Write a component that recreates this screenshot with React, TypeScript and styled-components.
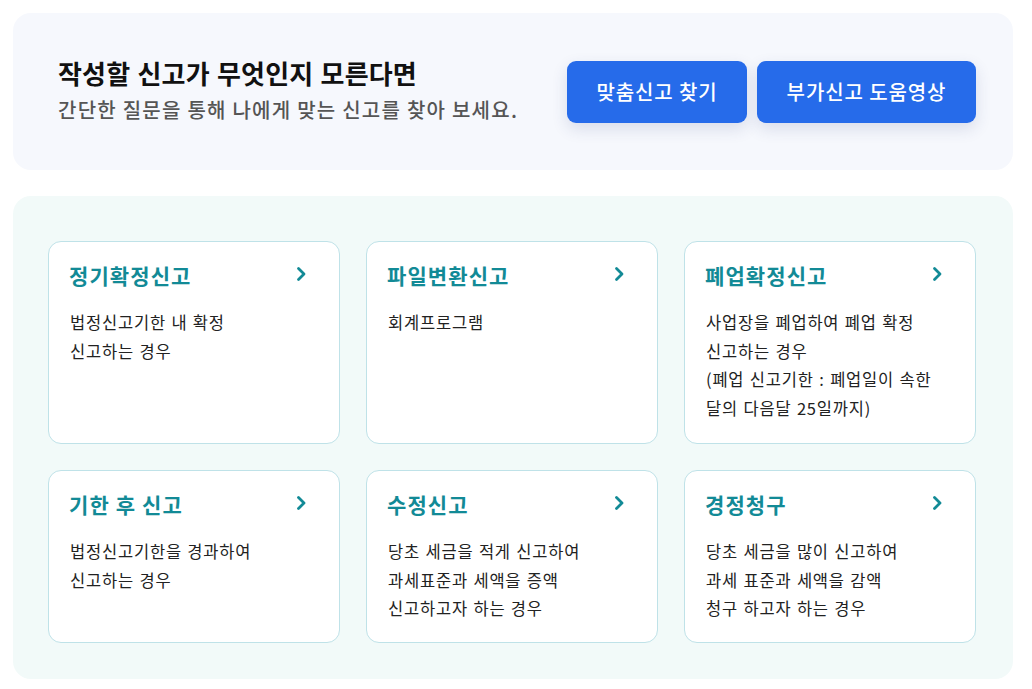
import React from "react";
import styled, {createGlobalStyle} from "styled-components";

const GlobalStyle = createGlobalStyle`
  html, body {
    margin: 0;
    padding: 0;
    background: #ffffff;
    font-family: "Noto Sans CJK KR", "Noto Sans", sans-serif;
    color: #222;
  }
`;

const Page = styled.div`
  display: flex;
  flex-direction: column;
  gap: 26px;
  padding: 13px 19px 9px 13px;
`;

const Banner = styled.section`
  display: flex;
  align-items: center;
  justify-content: space-between;
  height: 157px;
  box-sizing: border-box;
  padding: 0 37px 0 45px;
  background: #f6f8fd;
  border-radius: 18px;
`;

const BannerText = styled.div`
  display: flex;
  flex-direction: column;
  gap: 4px;
  margin-top: -3px;
`;

const BannerTitle = styled.h2`
  margin: 0;
  font-size: 26px;
  font-weight: 700;
  line-height: 36px;
  color: #111;
  letter-spacing: 0.2px;
  word-spacing: 1px;
`;

const BannerSub = styled.p`
  margin: 0;
  font-size: 20px;
  font-weight: 500;
  line-height: 30px;
  color: #555;
  letter-spacing: 1.25px;
`;

const ButtonRow = styled.div`
  display: flex;
  gap: 10px;
`;

const ActionButton = styled.button<{$width: number}>`
  width: ${p => p.$width}px;
  height: 62px;
  border: none;
  border-radius: 9px;
  background: #266bea;
  color: #fff;
  font-family: inherit;
  font-size: 20px;
  font-weight: 500;
  letter-spacing: 0.9px;
  box-shadow: 0 6px 16px rgba(40, 60, 120, 0.14);
  cursor: pointer;
`;

const Board = styled.section`
  display: grid;
  grid-template-columns: repeat(3, 292px);
  grid-template-rows: 203px 173px;
  gap: 26px;
  padding: 45px 37px 36px 35px;
  background: #f2faf9;
  border-radius: 18px;
`;

const Card = styled.a`
  display: flex;
  flex-direction: column;
  gap: 17px;
  padding: 17px 22px 0 20px;
  background: #fff;
  border: 1px solid #bfe2e8;
  border-radius: 13px;
  text-decoration: none;
  color: inherit;
  cursor: pointer;
`;

const CardHead = styled.div`
  display: flex;
  align-items: center;
  justify-content: space-between;
  padding-right: 10px;
`;

const CardTitle = styled.h3`
  margin: 0;
  font-size: 21px;
  font-weight: 700;
  line-height: 32px;
  color: #128a96;
  letter-spacing: 1.1px;
`;

const CardDesc = styled.p`
  margin: 0 0 0 1px;
  font-size: 16.5px;
  line-height: 28.5px;
  color: #222;
  letter-spacing: 0.8px;
  word-spacing: 1px;
`;

const ChevronIcon = styled.svg`
  margin-bottom: 3px;
`;

const Chevron = () => (
  <ChevronIcon width="12" height="16" viewBox="0 0 12 16" fill="none">
    <path d="M3.5 2.5 L9 8 L3.5 13.5" stroke="#128a96" strokeWidth="2.8" strokeLinecap="round" strokeLinejoin="round"/>
  </ChevronIcon>
);

const items = [
  {title: "정기확정신고", lines: ["법정신고기한 내 확정", "신고하는 경우"]},
  {title: "파일변환신고", lines: ["회계프로그램"]},
  {title: "폐업확정신고", lines: ["사업장을 폐업하여 폐업 확정", "신고하는 경우", "(폐업 신고기한 : 폐업일이 속한", "달의 다음달 25일까지)"]},
  {title: "기한 후 신고", lines: ["법정신고기한을 경과하여", "신고하는 경우"]},
  {title: "수정신고", lines: ["당초 세금을 적게 신고하여", "과세표준과 세액을 증액", "신고하고자 하는 경우"]},
  {title: "경정청구", lines: ["당초 세금을 많이 신고하여", "과세 표준과 세액을 감액", "청구 하고자 하는 경우"]},
];

function App() {
  return (
    <>
      <GlobalStyle />
      <Page>
        <Banner>
          <BannerText>
            <BannerTitle>작성할 신고가 무엇인지 모른다면</BannerTitle>
            <BannerSub>간단한 질문을 통해 나에게 맞는 신고를 찾아 보세요.</BannerSub>
          </BannerText>
          <ButtonRow>
            <ActionButton $width={180}>맞춤신고 찾기</ActionButton>
            <ActionButton $width={219}>부가신고 도움영상</ActionButton>
          </ButtonRow>
        </Banner>

        <Board>
          {items.map(item => (
            <Card key={item.title}>
              <CardHead>
                <CardTitle>{item.title}</CardTitle>
                <Chevron />
              </CardHead>
              <CardDesc>
                {item.lines.map((line, i) => (
                  <React.Fragment key={i}>
                    {i > 0 && <br />}
                    {line}
                  </React.Fragment>
                ))}
              </CardDesc>
            </Card>
          ))}
        </Board>
      </Page>
    </>
  );
}

export default App;
